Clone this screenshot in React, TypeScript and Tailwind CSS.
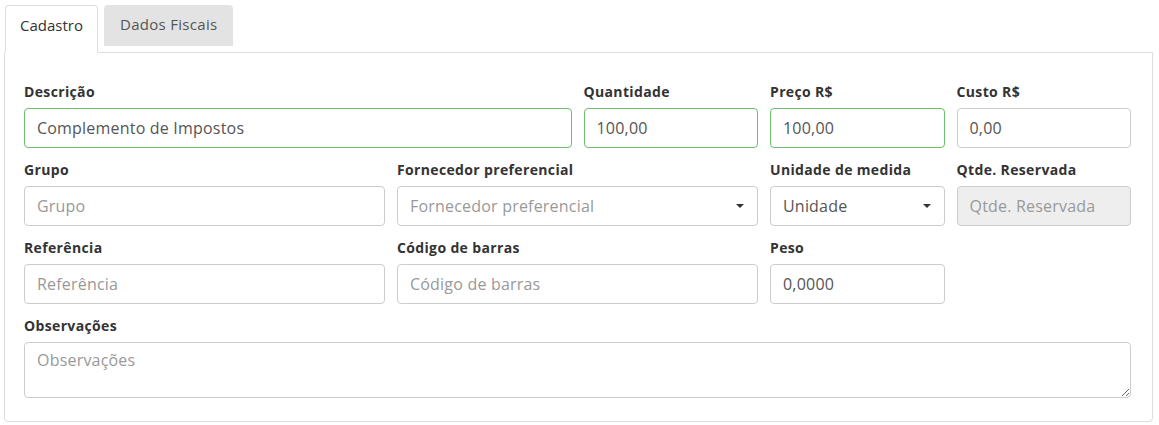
import React from 'react'

const font = { fontFamily: '"Open Sans", "Liberation Sans", sans-serif' }

function Label({ children }: { children: React.ReactNode }) {
  return <label className="block text-[14px] font-bold leading-4 tracking-[0.35px] text-[#333] mb-2">{children}</label>
}

function Field({
  label,
  value,
  placeholder,
  valid,
  disabled,
  span,
}: {
  label: string
  value?: string
  placeholder?: string
  valid?: boolean
  disabled?: boolean
  span: string
}) {
  return (
    <div className={span}>
      <Label>{label}</Label>
      <input
        readOnly
        defaultValue={value}
        placeholder={placeholder}
        disabled={disabled}
        className={
          'block w-full h-10 rounded px-3 text-[16px] tracking-[0.2px] text-[#555] placeholder:text-[#999] outline-none border ' +
          (valid ? 'border-[#6cbf6c] ' : 'border-[#ccc] ') +
          (disabled ? 'bg-[#eee]' : 'bg-white')
        }
        style={font}
      />
    </div>
  )
}

function SelectField({ label, value, placeholder, span }: { label: string; value?: string; placeholder?: string; span: string }) {
  return (
    <div className={span}>
      <Label>{label}</Label>
      <div className="flex items-center justify-between h-10 rounded border border-[#ccc] bg-white pl-3 pr-[13px]">
        <span className={'text-[16px] tracking-[0.2px] ' + (value ? 'text-[#555]' : 'text-[#999]')}>{value ?? placeholder}</span>
        <span className="w-0 h-0 border-x-4 border-x-transparent border-t-4 border-t-[#333]" />
      </div>
    </div>
  )
}

export default function App() {
  return (
    <div className="w-[1159px] h-[425px] bg-white pt-[5px] pl-1 pr-[6px]" style={font}>
      {/* Abas */}
      <div className="flex items-end pl-px">
        <div className="h-[48px] -mb-px px-[14px] flex items-start pt-[8px] bg-white border border-[#ddd] border-b-white rounded-t text-[15px] text-[#333] relative z-10">
          Cadastro
        </div>
        <div className="h-[41px] ml-[6px] mb-[6px] px-4 flex items-start pt-[8px] bg-[#e3e3e3] rounded-t text-[15px] tracking-[0.3px] text-[#555]">
          Dados Fiscais
        </div>
      </div>

      {/* Painel */}
      <div className="border border-[#ddd] rounded-b h-[370px] pl-[19px] pr-[21px] pt-[31px]">
        <div className="grid grid-cols-12 gap-x-3 gap-y-[14px]">
          <Field span="col-span-6" label="Descrição" value="Complemento de Impostos" valid />
          <Field span="col-span-2" label="Quantidade" value="100,00" valid />
          <Field span="col-span-2" label="Preço R$" value="100,00" valid />
          <Field span="col-span-2" label="Custo R$" value="0,00" />

          <Field span="col-span-4" label="Grupo" placeholder="Grupo" />
          <SelectField span="col-span-4" label="Fornecedor preferencial" placeholder="Fornecedor preferencial" />
          <SelectField span="col-span-2" label="Unidade de medida" value="Unidade" />
          <Field span="col-span-2" label="Qtde. Reservada" placeholder="Qtde. Reservada" disabled />

          <Field span="col-span-4" label="Referência" placeholder="Referência" />
          <Field span="col-span-4" label="Código de barras" placeholder="Código de barras" />
          <Field span="col-span-2" label="Peso" value="0,0000" />
          <div className="col-span-2" />

          <div className="col-span-12">
            <Label>Observações</Label>
            <textarea
              placeholder="Observações"
              className="block w-full h-[56px] rounded border border-[#ccc] px-3 py-[5px] text-[16px] tracking-[0.2px] text-[#555] placeholder:text-[#999] outline-none"
              style={font}
            />
          </div>
        </div>
      </div>
    </div>
  )
}
